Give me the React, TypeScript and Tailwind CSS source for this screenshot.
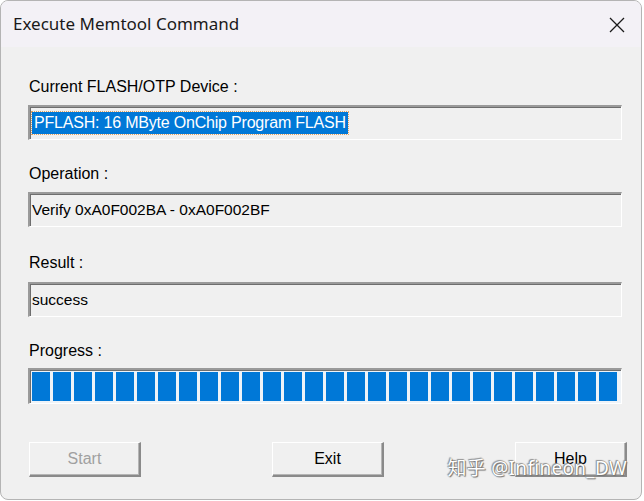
import React from "react";

const sunken =
  "border-t-2 border-l-2 border-b border-r border-t-[#9a9a9a] border-l-[#9a9a9a] border-b-white border-r-white shadow-[inset_1px_1px_0_#6e6e6e]";

function Field({ children }: { children: React.ReactNode }) {
  return (
    <div className={`h-[35px] w-[594px] ${sunken} bg-[#f0f0f0] flex items-center pl-[2px] text-[15.5px] text-black`}>
      {children}
    </div>
  );
}

function Btn({ label, disabled }: { label: string; disabled?: boolean }) {
  return (
    <div
      className={`w-[112px] h-[35px] flex items-center justify-center border-t border-l border-b-2 border-r-2 border-t-white border-l-white border-b-[#8a8a8a] border-r-[#8a8a8a] shadow-[inset_-1px_-1px_0_#b5b5b5] bg-[#f0f0f0] text-[16px] ${
        disabled ? "text-[#a0a0a0]" : "text-black"
      }`}
    >
      {label}
    </div>
  );
}

export default function App() {
  const segs = Array.from({ length: 28 });
  return (
    <div className="w-[644px] h-[501px] bg-white" style={{ fontFamily: '"Liberation Sans", Arial, sans-serif' }}>
      <div className="relative w-[642px] h-[500px] rounded-[8px] border border-[#b4b4b4] overflow-hidden bg-[#f0f0f0] flex flex-col">
        <div className="h-[46px] bg-[#f3f1f6] flex items-center justify-between pl-[12px] pr-[16px] shrink-0">
          <span className="text-[17px] text-[#1a1a1a]" style={{ fontFamily: '"Noto Sans", "Open Sans", sans-serif' }}>
            Execute Memtool Command
          </span>
          <svg width="16" height="16" viewBox="0 0 16 16" className="mt-[1px]">
            <path d="M1 1 L15 15 M15 1 L1 15" stroke="#1a1a1a" strokeWidth="1.3" />
          </svg>
        </div>
        <div className="flex flex-col pl-[27px] pt-[30px]">
          <div className="h-[20px] leading-[20px] text-[16px] text-black pl-[1px]">Current FLASH/OTP Device :</div>
          <div className="mt-[8px]">
            <Field>
              <span className="bg-[#0078d7] text-white text-[16px] tracking-[-0.2px] px-[2px] leading-[22px] outline-1 outline-dotted outline-[#e0a060]">
                PFLASH: 16 MByte OnChip Program FLASH
              </span>
            </Field>
          </div>
          <div className="mt-[24px] h-[20px] leading-[20px] text-[16px] text-black pl-[1px]">Operation :</div>
          <div className="mt-[8px]">
            <Field>Verify 0xA0F002BA - 0xA0F002BF</Field>
          </div>
          <div className="mt-[26px] h-[20px] leading-[20px] text-[16px] text-black pl-[1px]">Result :</div>
          <div className="mt-[9px]">
            <Field>success</Field>
          </div>
          <div className="mt-[24px] h-[20px] leading-[20px] text-[16px] text-black pl-[1px]">Progress :</div>
          <div className={`mt-[7px] h-[36px] w-[594px] ${sunken} bg-[#eef3f8] flex items-stretch gap-[3px] pl-[2px] py-[2px]`}>
            {segs.map((_, i) => (
              <div key={i} className="w-[18px] bg-[#0078d7]" />
            ))}
          </div>
          <div className="mt-[38px] flex gap-[131px] pl-[1px]">
            <Btn label="Start" disabled />
            <Btn label="Exit" />
            <Btn label="Help" />
          </div>
        </div>
        <div
          className="absolute right-[14px] bottom-[17px] text-[19px] text-white tracking-[0.3px] [text-shadow:0_0_1px_#555,1px_1px_1px_#777,-1px_-1px_1px_#999]"
          style={{ fontFamily: '"Noto Sans", "Noto Sans CJK SC", sans-serif' }}
        >
          知乎 @Infineon_DW
        </div>
      </div>
    </div>
  );
}
